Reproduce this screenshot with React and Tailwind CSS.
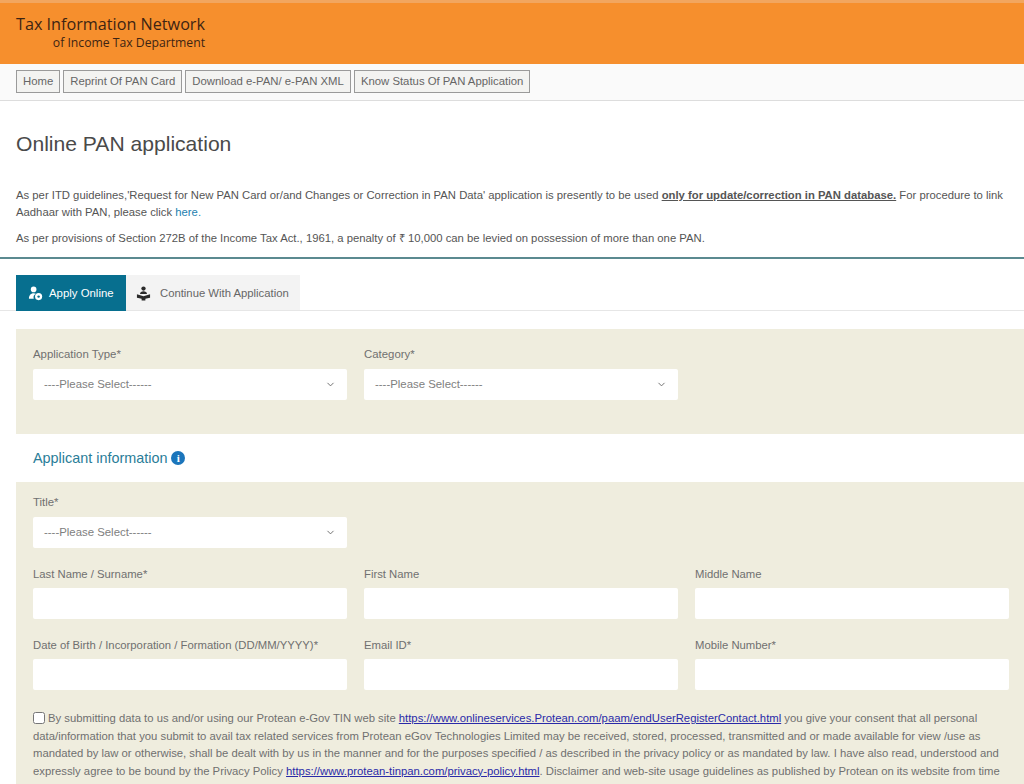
import { ChevronDown } from "lucide-react";

const NavButton = ({ children }) => (
  <button className="h-[23px] px-[6px] border border-[#9a9a9a] bg-[#f3f3f1] text-[11.35px] leading-none text-[#666] whitespace-nowrap">
    {children}
  </button>
);

const SelectField = ({ label }) => (
  <div>
    <div className="h-[17px] text-[11.4px] leading-[17px] text-[#707070]">{label}</div>
    <div className="mt-[6px] flex h-[31px] items-center justify-between rounded-[2px] bg-white px-[11px] text-[11.4px] text-[#808080]">
      <span>----Please Select------</span>
      <ChevronDown className="h-[11px] w-[11px] text-[#666]" strokeWidth={2} />
    </div>
  </div>
);

const TextField = ({ label }) => (
  <div>
    <div className="h-[18px] pt-[1px] text-[11.3px] leading-[17px] text-[#707070]">{label}</div>
    <div className="mt-[5px] h-[31px] rounded-[2px] bg-white" />
  </div>
);

const ApplyIcon = () => (
  <svg viewBox="0 0 16 16" className="h-[15px] w-[15px] text-white" fill="currentColor">
    <circle cx="6" cy="3.600" r="3" />
    <path d="M1 13.500c0-3.500 2-5.800 5-5.800 1 0 1.800.2 2.400.6a4.500 4.500 0 0 0-2.300 5.200z" />
    <circle cx="11.300" cy="11.300" r="3.800" />
    <circle cx="11.300" cy="11.300" r="1.300" fill="#076f8f" />
  </svg>
);

const ContinueIcon = () => (
  <svg viewBox="0 0 16 16" className="h-[15px] w-[15px] text-[#2b2b2b]" fill="currentColor">
    <circle cx="8" cy="2.700" r="2.300" />
    <path d="M4.300 8.500c0-2 1.600-3 3.700-3s3.700 1 3.700 3z" />
    <path d="M1 8.800l7 2.200 7-2.200v3.700l-5 1v1.900H6v-1.900l-5-1z" />
  </svg>
);

export default function App() {
  return (
    <div className="h-[784px] w-[1024px] overflow-hidden bg-white font-['Liberation_Sans',Arial,sans-serif]">
      <header className="h-[64px] border-t-[3px] border-[#f2a65f] bg-[#f68f2d] pl-[16px] pt-[10px] font-['Open_Sans',sans-serif] text-[#3d2413]">
        <div className="w-[189px] text-right">
          <div className="text-[16.2px] leading-[22px] whitespace-nowrap">Tax Information Network</div>
          <div className="text-[12.2px] leading-[15px] font-medium whitespace-nowrap">of Income Tax Department</div>
        </div>
      </header>

      <nav className="flex h-[37px] border-b border-[#dddddd] bg-[#fafafa] pl-[16px] pt-[6px]">
        <div className="flex h-[23px] gap-[3px]">
          <NavButton>Home</NavButton>
          <NavButton>Reprint Of PAN Card</NavButton>
          <NavButton>Download e-PAN/ e-PAN XML</NavButton>
          <NavButton>Know Status Of PAN Application</NavButton>
        </div>
      </nav>

      <h1 className="pl-[16px] pt-[30px] text-[21.1px] leading-[26px] text-[#4a4a4a]">Online PAN application</h1>

      <div className="border-b-2 border-[#5b8a90] pb-[10px] pl-[16px] pr-[14px] pt-[30px] text-[11.3px] text-[#555]">
        <p className="leading-[17px]">
          As per ITD guidelines,'Request for New PAN Card or/and Changes or Correction in PAN Data' application is presently to be used{" "}
          <b className="underline">only for update/correction in PAN database.</b> For procedure to link Aadhaar with PAN, please click{" "}
          <span className="text-[#1d7fb0]">here.</span>
        </p>
        <p className="mt-[9px] leading-[17px]">
          As per provisions of Section 272B of the Income Tax Act., 1961, a penalty of ₹ 10,000 can be levied on possession of more than one PAN.
        </p>
      </div>

      <div className="mt-[16px] flex h-[36px] border-b border-[#e6e6e6] pl-[16px]">
        <div className="flex h-[36px] w-[110px] items-center gap-[6px] bg-[#076f8f] pl-[12px] pt-[1px] text-[11.4px] text-white">
          <ApplyIcon />
          Apply Online
        </div>
        <div className="flex h-[35px] w-[174px] items-center gap-[9px] bg-[#f3f3f3] pl-[10px] pt-[1px] text-[11.3px] text-[#666]">
          <ContinueIcon />
          Continue With Application
        </div>
      </div>

      <section className="ml-[16px] mt-[18px] h-[105px] bg-[#efedde] pl-[17px] pr-[15px] pt-[17px]">
        <div className="grid grid-cols-3 gap-x-[17px]">
          <SelectField label="Application Type*" />
          <SelectField label="Category*" />
        </div>
      </section>

      <h2 className="ml-[33px] flex h-[48px] items-start gap-[4px] pt-[14px] text-[14.4px] leading-[20px] text-[#2a7d98]">
        Applicant information
        <span className="mt-[3px] flex h-[14px] w-[14px] items-center justify-center rounded-full bg-[#1b75bb] font-['Liberation_Serif',serif] text-[11px] font-bold text-white">i</span>
      </h2>

      <section className="ml-[16px] h-[302px] bg-[#efedde] pl-[17px] pr-[15px] pt-[12px]">
        <div className="grid grid-cols-3 gap-x-[17px] gap-y-[17px]">
          <div className="col-span-3 w-[314px]">
            <SelectField label="Title*" />
          </div>
          <TextField label="Last Name / Surname*" />
          <TextField label="First Name" />
          <TextField label="Middle Name" />
          <TextField label="Date of Birth / Incorporation / Formation (DD/MM/YYYY)*" />
          <TextField label="Email ID*" />
          <TextField label="Mobile Number*" />
        </div>

        <p className="mt-[20px] text-[11.3px] leading-[17.6px] text-[#707070]">
          <input type="checkbox" className="mr-[3px] h-[12px] w-[12px] align-[-2px]" />
          By submitting data to us and/or using our Protean e-Gov TIN web site{" "}
          <span className="text-[#2a2aa8] underline">https://www.onlineservices.Protean.com/paam/endUserRegisterContact.html</span>{" "}
          you give your consent that all personal data/information that you submit to avail tax related services from Protean eGov Technologies Limited may be received, stored, processed, transmitted and or made available for view /use as mandated by law or otherwise, shall be dealt with by us in the manner and for the purposes specified / as described in the privacy policy or as mandated by law. I have also read, understood and expressly agree to be bound by the Privacy Policy{" "}
          <span className="text-[#2a2aa8] underline">https://www.protean-tinpan.com/privacy-policy.html</span>. Disclaimer and web-site usage guidelines as published by Protean on its website from time
        </p>
      </section>
    </div>
  );
}
